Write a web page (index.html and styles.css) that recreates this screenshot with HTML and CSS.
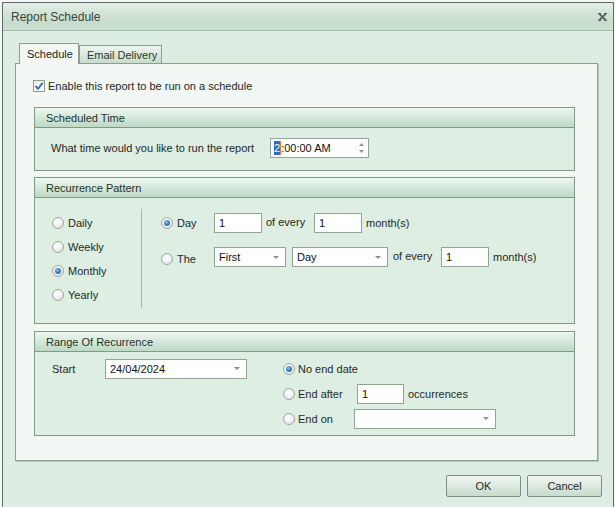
FILE: index.html
```html
<!DOCTYPE html>
<html>
<head>
<meta charset="utf-8">
<link rel="stylesheet" href="styles.css">
</head>
<body>
<div class="window">
  <div class="titlebar">
    <span class="title">Report Schedule</span>
    <svg class="close" width="9" height="8" viewBox="0 0 9 8"><path d="M1 0.5 L8 7.5 M8 0.5 L1 7.5" stroke="#5d625f" stroke-width="1.8" fill="none"/><path d="M0 0.5 H3 M6 0.5 H9 M0 7.5 H3 M6 7.5 H9" stroke="#5d625f" stroke-width="1" fill="none"/></svg>
  </div>
  <div class="body">
    <div class="tabs">
      <div class="tab tab-active">Schedule</div>
      <div class="tab tab-inactive">Email Delivery</div>
    </div>
    <div class="panel">
      <div class="check-row">
        <span class="checkbox"><svg width="10" height="10" viewBox="0 0 10 10"><path d="M1.5 5 L4 7.8 L8.6 1.8" stroke="#3d6db0" stroke-width="1.9" fill="none"/></svg></span>
        <span>Enable this report to be run on a schedule</span>
      </div>

      <section class="group group-time">
        <div class="group-head">Scheduled Time</div>
        <div class="group-body time-body">
          <span class="time-label">What time would you like to run the report</span>
          <div class="field spin">
            <span class="sel">2</span><span class="caret"></span><span>:00:00 AM</span>
            <svg class="spin-btns" width="7" height="14" viewBox="0 0 7 14"><path d="M1 5 L3.5 2 L6 5 Z M1 9 L3.5 12 L6 9 Z" fill="#8c918e"/></svg>
          </div>
        </div>
      </section>

      <section class="group group-pattern">
        <div class="group-head">Recurrence Pattern</div>
        <div class="group-body pattern-body">
          <div class="freq-col">
            <div class="radio-row"><span class="radio"></span><span>Daily</span></div>
            <div class="radio-row"><span class="radio"></span><span>Weekly</span></div>
            <div class="radio-row"><span class="radio checked"></span><span>Monthly</span></div>
            <div class="radio-row"><span class="radio"></span><span>Yearly</span></div>
          </div>
          <div class="detail-col">
            <div class="detail-row">
              <div class="radio-cell"><span class="radio checked"></span><span>Day</span></div>
              <div class="field num">1</div>
              <span class="of-every">of every</span>
              <div class="field num">1</div>
              <span class="unit">month(s)</span>
            </div>
            <div class="detail-row row-the">
              <div class="radio-cell"><span class="radio"></span><span>The</span></div>
              <div class="field combo combo-first"><span>First</span><span class="arrow"></span></div>
              <div class="field combo combo-day"><span>Day</span><span class="arrow"></span></div>
              <span class="of-every of-every-2">of every</span>
              <div class="field num">1</div>
              <span class="unit">month(s)</span>
            </div>
          </div>
        </div>
      </section>

      <section class="group group-range">
        <div class="group-head">Range Of Recurrence</div>
        <div class="group-body range-body">
          <div class="start-row">
            <span class="start-label">Start</span>
            <div class="field combo combo-date"><span>24/04/2024</span><span class="arrow"></span></div>
          </div>
          <div class="end-col">
            <div class="end-row"><span class="radio checked"></span><span>No end date</span></div>
            <div class="end-row">
              <div class="end-cell"><span class="radio"></span><span>End after</span></div>
              <div class="field num occ">1</div>
              <span class="unit-occ">occurrences</span>
            </div>
            <div class="end-row">
              <div class="end-cell end-cell-on"><span class="radio"></span><span>End on</span></div>
              <div class="field combo combo-end"><span></span><span class="arrow"></span></div>
            </div>
          </div>
        </div>
      </section>
    </div>
    <div class="buttons">
      <button class="btn">OK</button>
      <button class="btn">Cancel</button>
    </div>
  </div>
</div>
</body>
</html>
```
FILE: styles.css
```css
html, body {
  margin: 0;
  padding: 0;
  background: #f4f6f5;
}
body {
  font-family: "Liberation Sans", Arial, sans-serif;
  font-size: 11px;
  color: #1d2a23;
}
.window {
  margin: 2px 0 0 2px;
  width: 612px;
  height: 505px;
  box-sizing: border-box;
  border: 1px solid #5e6e63;
  border-bottom: none;
  background: #deede3;
  display: flex;
  flex-direction: column;
}
.titlebar {
  height: 27px;
  flex: none;
  border-bottom: 1px solid #9dbda7;
  background: linear-gradient(#e4eee7 0%, #d6e6da 30%, #c6dccc 75%, #cfe2d4 100%);
  display: flex;
  align-items: center;
  justify-content: space-between;
  padding: 0 6px 0 8px;
}
.title {
  font-size: 12px;
  color: #3c4540;
}
.close {
  display: block;
}
.body {
  flex: 1;
  padding: 12px 15px 0 12px;
}
.tabs {
  display: flex;
  align-items: flex-end;
  height: 20px;
  margin-left: 4px;
  position: relative;
  z-index: 1;
}
.tab {
  box-sizing: border-box;
  border: 1px solid #8a9f90;
  border-bottom: none;
  padding-left: 7px;
  display: flex;
  align-items: center;
}
.tab-active {
  width: 60px;
  height: 21px;
  margin-bottom: -1px;
  background: #f2f7f4;
  color: #1b2620;
}
.tab-inactive {
  width: 83px;
  height: 18px;
  background: linear-gradient(#eef5f0, #c6dccc);
  color: #2a3a30;
}
.panel {
  height: 398px;
  box-sizing: border-box;
  border: 1px solid #8a9f90;
  background: #f2f7f4;
  padding: 14px 22px 0 18px;
  box-shadow: 1px 1px 0 #b7c9bc;
}
.check-row {
  display: flex;
  align-items: center;
  height: 16px;
  gap: 3px;
  margin-left: -1px;
}
.checkbox {
  width: 12px;
  height: 12px;
  box-sizing: border-box;
  border: 1px solid #8c9c91;
  background: linear-gradient(#e9eeeb, #ffffff);
  display: flex;
  align-items: center;
  justify-content: center;
}
.checkbox svg { display: block; }
.group {
  border: 1px solid #7f9b87;
  background: #deeee3;
  margin-top: 13px;
}
.group-pattern { margin-top: 6px; }
.group-range { margin-top: 7px; }
.group-head {
  height: 19px;
  border-bottom: 1px solid #7f9b87;
  background: linear-gradient(#eef6f0, #d3e7d9 55%, #bddac5);
  padding-left: 11px;
  display: flex;
  align-items: center;
  color: #24342a;
}
.group-body {
  box-sizing: border-box;
}
.field {
  box-sizing: border-box;
  height: 20px;
  border: 1px solid #8fa596;
  background: #ffffff;
  display: flex;
  align-items: center;
  padding-left: 4px;
  color: #111;
}
.time-body {
  height: 42px;
  padding: 10px 0 0 16px;
  display: flex;
  align-items: center;
  align-self: flex-start;
}
.time-body { align-items: flex-start; }
.time-label {
  width: 219px;
  line-height: 20px;
}
.spin {
  width: 99px;
  padding-left: 3px;
  position: relative;
}
.sel {
  background: #2a6cd4;
  color: #fff;
  line-height: 14px;
}
.caret {
  width: 1px;
  height: 14px;
  background: #e07a22;
}
.spin-btns {
  margin-left: auto;
  margin-right: 3px;
  display: block;
}
.pattern-body {
  height: 125px;
  display: flex;
  padding-left: 17px;
}
.freq-col {
  margin-top: 11px;
  width: 90px;
  height: 99px;
  box-sizing: border-box;
  border-right: 1px solid #a7b9ac;
  padding-top: 2px;
}
.radio-row {
  height: 24px;
  display: flex;
  align-items: center;
  gap: 4px;
}
.radio {
  width: 12px;
  height: 12px;
  flex: none;
  box-sizing: border-box;
  border-radius: 50%;
  border: 1px solid #a0aaa5;
  background: radial-gradient(circle at 45% 40%, #ffffff 0%, #f1f3f2 45%, #cfd6d3 100%);
  position: relative;
}
.radio.checked::after {
  content: "";
  position: absolute;
  left: 2px;
  top: 2px;
  width: 6px;
  height: 6px;
  border-radius: 50%;
  background: radial-gradient(circle at 40% 35%, #9cc7ea 0%, #3c7fbf 45%, #1d5a93 100%);
}
.detail-col {
  margin-left: 19px;
  margin-top: 15px;
}
.detail-row {
  display: flex;
  align-items: center;
  height: 20px;
}
.row-the {
  margin-top: 14px;
}
.radio-cell {
  width: 53px;
  display: flex;
  align-items: center;
  gap: 4px;
}
.row-the .radio-cell .radio { margin-top: 3px; }
.row-the .radio-cell span:last-child { margin-top: 3px; }
.num {
  width: 48px;
}
.of-every {
  width: 52px;
  padding-left: 4px;
  box-sizing: border-box;
  margin-top: -3px;
}
.of-every-2 {
  width: 53px;
  padding-left: 5px;
}
.unit {
  margin-left: 4px;
  margin-top: -1px;
}
.combo {
  justify-content: space-between;
  padding-right: 6px;
}
.arrow {
  width: 0;
  height: 0;
  border-left: 3px solid transparent;
  border-right: 3px solid transparent;
  border-top: 3px solid #8a918d;
}
.combo-first { width: 72px; }
.combo-day { width: 96px; margin-left: 6px; }
.range-body {
  height: 83px;
  display: flex;
  padding: 4px 0 0 17px;
}
.start-row {
  height: 25px;
  display: flex;
  align-items: center;
}
.start-label {
  width: 53px;
}
.combo-date { width: 142px; }
.end-col {
  margin-left: 36px;
}
.end-row {
  height: 25px;
  display: flex;
  align-items: center;
  gap: 3px;
}
.end-cell {
  width: 74px;
  display: flex;
  align-items: center;
  gap: 3px;
  margin-right: -3px;
}
.end-cell-on { width: 71px; }
.occ { width: 47px; }
.unit-occ { margin-left: 1px; }
.combo-end { width: 142px; }
.buttons {
  display: flex;
  justify-content: flex-end;
  gap: 6px;
  margin: 14px -4px 0 0;
}
.btn {
  width: 75px;
  height: 22px;
  box-sizing: border-box;
  border: 1px solid #7f8e84;
  border-radius: 2px;
  background: linear-gradient(#f3f7f4, #dde9e0 50%, #c8dbcd);
  font-family: "Liberation Sans", Arial, sans-serif;
  font-size: 11px;
  color: #1d2a23;
  padding: 0;
}
```
